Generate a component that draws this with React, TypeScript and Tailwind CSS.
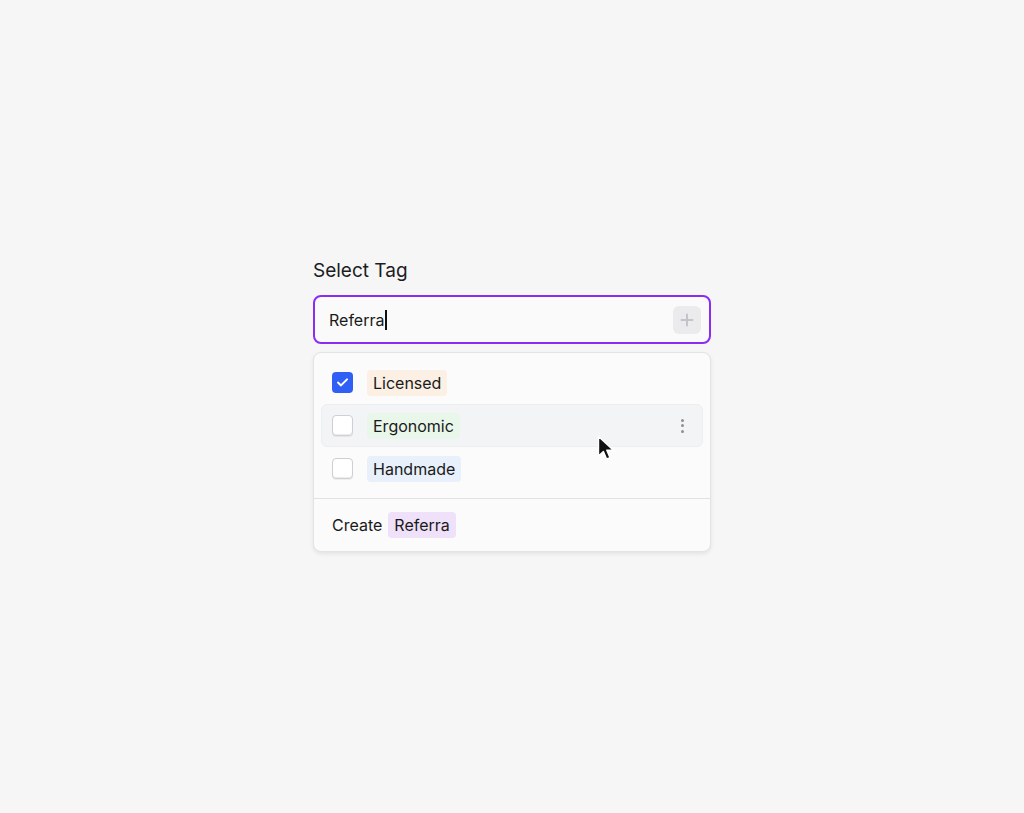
import React from "react";

function Check() {
  return (
    <svg width="15" height="15" viewBox="0 0 15 15" fill="none">
      <path d="M3 7.6L6 10.4L12 4.4" stroke="white" strokeWidth="2" strokeLinecap="round" strokeLinejoin="round" />
    </svg>
  );
}

function Cursor() {
  return (
    <svg width="20" height="28" viewBox="0 0 20 28" className="absolute left-[597px] top-[435px] pointer-events-none">
      <path d="M1.5 1.5 L1.5 21 L6.4 16.4 L9.6 24 L13 22.6 L9.8 15.2 L16.4 15.2 Z" fill="#111" stroke="white" strokeWidth="1.4" strokeLinejoin="round" />
    </svg>
  );
}

type Row = { label: string; bg: string; checked?: boolean; hover?: boolean };

export default function App() {
  const rows: Row[] = [
    { label: "Licensed", bg: "bg-[#fcefe3]", checked: true },
    { label: "Ergonomic", bg: "bg-[#e9f6ea]", hover: true },
    { label: "Handmade", bg: "bg-[#e8f1fb]" },
  ];
  return (
    <div
      className="relative w-[1024px] h-[813px] bg-[#f6f6f6] text-[#161616]"
      style={{ fontFamily: "Inter, 'Noto Sans', sans-serif" }}
    >
      <div className="absolute left-[313px] top-[258px] w-[398px]">
        <div className="text-[19px] leading-[26px] text-[#1c1c22] mb-[11px]">Select Tag</div>
        <div className="flex items-center h-[49px] rounded-[8px] border-2 border-[#8a2cf3] bg-[#fafafa] pl-[14px] pr-[8px]">
          <div className="flex-1 flex items-center text-[16px] text-[#1a1a1a]">
            Referra
            <span className="ml-[1px] inline-block w-[1.5px] h-[20px] bg-[#111]" />
          </div>
          <div className="w-[28px] h-[28px] rounded-[6px] bg-[#ebebee] flex items-center justify-center">
            <svg width="14" height="14" viewBox="0 0 14 14">
              <path d="M7 1.5V12.5M1.5 7H12.5" stroke="#c3c3c8" strokeWidth="2" strokeLinecap="round" />
            </svg>
          </div>
        </div>
        <div className="mt-[8px] rounded-[8px] border border-[#e3e3e6] bg-[#fbfbfb] shadow-[0_2px_4px_rgba(0,0,0,0.08)]">
          <div className="pt-[8px] pb-[8px] px-[7px] flex flex-col">
            {rows.map((r) => (
              <div
                key={r.label}
                className={
                  "flex items-center h-[43px] rounded-[6px] pl-[10px] pr-[18px] border " +
                  (r.hover ? "bg-[#f3f4f6] border-[#eceef1]" : "border-transparent")
                }
              >
                {r.checked ? (
                  <div className="w-[21px] h-[21px] rounded-[4px] bg-[#2f5ff5] flex items-center justify-center">
                    <Check />
                  </div>
                ) : (
                  <div className="w-[21px] h-[21px] rounded-[4px] bg-white border-[1.5px] border-[#cfcfd4] shadow-[inset_0_-1px_1px_rgba(0,0,0,0.08),0_1px_1px_rgba(0,0,0,0.06)]" />
                )}
                <div className={"ml-[14px] h-[26px] flex items-center px-[6px] rounded-[4px] text-[16px] text-[#1a1a1a] " + r.bg}>
                  {r.label}
                </div>
                <div className="flex-1" />
                {r.hover && (
                  <div className="flex flex-col gap-[2.5px] items-center">
                    <span className="w-[3px] h-[3px] rounded-full bg-[#8e9098]" />
                    <span className="w-[3px] h-[3px] rounded-full bg-[#8e9098]" />
                    <span className="w-[3px] h-[3px] rounded-full bg-[#8e9098]" />
                  </div>
                )}
              </div>
            ))}
          </div>
          <div className="h-px bg-[#e2e2e5]" />
          <div className="h-[52px] flex items-center pl-[18px] text-[16px] text-[#1a1a1a]">
            Create
            <span className="ml-[6px] h-[26px] flex items-center px-[6px] rounded-[4px] bg-[#efe1f9]">Referra</span>
          </div>
        </div>
      </div>
      <Cursor />
    </div>
  );
}
